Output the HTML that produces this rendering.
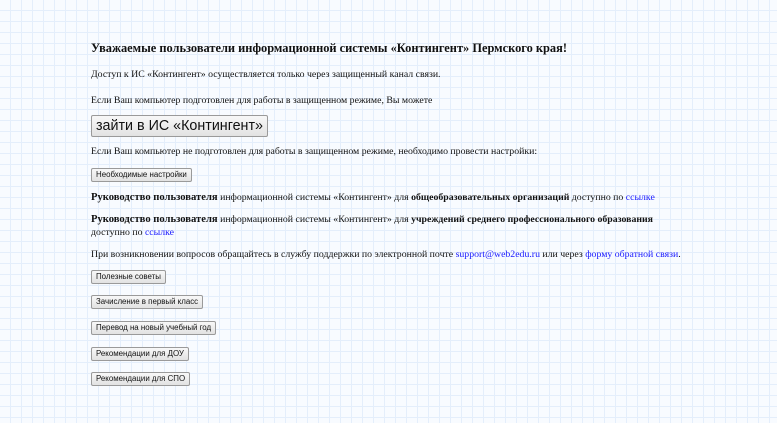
<!DOCTYPE html>
<html><head><meta charset="utf-8"><style>
body{margin:0;width:777px;height:423px;overflow:hidden;background-color:#f8fbff;
background-image:linear-gradient(#e4eefb 1px,transparent 1px),linear-gradient(90deg,#e4eefb 1px,transparent 1px);
background-size:11px 11px;background-position:10px 10px;font-family:"Liberation Serif",serif;font-size:9.8px;color:#111;position:relative}
.a{position:absolute;left:91px;white-space:nowrap;line-height:13px}
h1{font-size:12.4px;margin:0}
a{color:#1a1aff;text-decoration:none}
.btn{position:absolute;left:91px;font-family:"Liberation Sans",sans-serif;font-size:7.9px;background:linear-gradient(#f8f8f8,#e2e2e2);border:1px solid #9a9a9a;border-radius:2px;padding:0 4px;height:12px;line-height:12px;white-space:nowrap}
.big{font-size:14.3px;height:20px;line-height:20px;padding:0 4px}
</style></head><body>
<div class="a" style="top:42px"><h1>Уважаемые пользователи информационной системы «Контингент» Пермского края!</h1></div>
<div class="a" style="top:68px">Доступ к ИС «Контингент» осуществляется только через защищенный канал связи.</div>
<div class="a" style="top:94px">Если Ваш компьютер подготовлен для работы в защищенном режиме, Вы можете</div>
<div class="btn big" style="top:115px">зайти в ИС «Контингент»</div>
<div class="a" style="top:145px">Если Ваш компьютер не подготовлен для работы в защищенном режиме, необходимо провести настройки:</div>
<div class="btn" style="top:168px">Необходимые настройки</div>
<div class="a" style="top:191px"><b style="font-size:10.6px">Руководство пользователя</b> информационной системы «Контингент» для <b>общеобразовательных организаций</b> доступно по <a>ссылке</a></div>
<div class="a" style="top:213px"><b style="font-size:10.6px">Руководство пользователя</b> информационной системы «Контингент» для <b>учреждений среднего профессионального образования</b><br>доступно по <a>ссылке</a></div>
<div class="a" style="top:248px">При возникновении вопросов обращайтесь в службу поддержки по электронной почте <a>support@web2edu.ru</a> или через <a>форму обратной связи</a>.</div>
<div class="btn" style="top:270px">Полезные советы</div>
<div class="btn" style="top:295px">Зачисление в первый класс</div>
<div class="btn" style="top:321px">Перевод на новый учебный год</div>
<div class="btn" style="top:347px">Рекомендации для ДОУ</div>
<div class="btn" style="top:372px">Рекомендации для СПО</div>
</body></html>
